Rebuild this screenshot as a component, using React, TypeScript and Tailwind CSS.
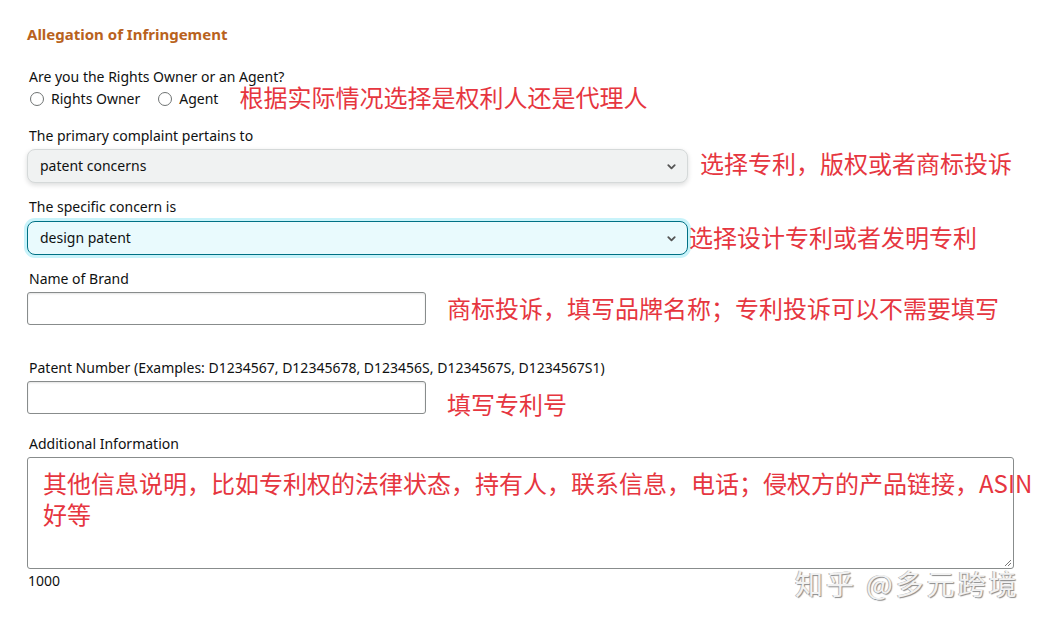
import type { ReactNode } from 'react'

const LABEL = "text-[14px] leading-[18px] text-[#0f1111] [font-family:'Noto_Sans',sans-serif]"
const NOTE = "text-[24px] leading-[30px] text-[#e6363f] whitespace-nowrap [font-family:'Noto_Sans_CJK_SC','Noto_Sans',sans-serif]"

function Chevron() {
  return (
    <svg width="11" height="11" viewBox="0 0 12 12" className="text-[#555]">
      <path d="M2.5 4.5 L6 8 L9.5 4.5" fill="none" stroke="currentColor" strokeWidth="2" strokeLinecap="round" strokeLinejoin="round" />
    </svg>
  )
}

function Radio({ label }: { label: string }) {
  return (
    <label className="flex items-center gap-[7px]">
      <span className="w-[14px] h-[14px] rounded-full border border-[#6f7373] bg-white" />
      <span className={LABEL}>{label}</span>
    </label>
  )
}

function Select({ value, focused }: { value: string; focused?: boolean }) {
  const cls = focused
    ? 'bg-[#e9fafd] border-[#007185] shadow-[0_0_0_3px_#c8f3fa]'
    : 'bg-[#f0f2f2] border-[#d5d9d9] shadow-[0_2px_5px_rgba(15,17,17,0.15)]'
  return (
    <div className={`w-[661px] h-[34px] shrink-0 rounded-[8px] border flex items-center justify-between pl-[12px] pr-[10px] ${cls}`}>
      <span className={LABEL}>{value}</span>
      <Chevron />
    </div>
  )
}

function Input() {
  return <div className="w-[399px] h-[33px] shrink-0 rounded-[3px] border border-[#888c8c] bg-white shadow-[inset_0_1px_2px_rgba(15,17,17,0.12)]" />
}

function Note({ children, className = '' }: { children: ReactNode; className?: string }) {
  return <span className={`${NOTE} ${className}`}>{children}</span>
}

export default function App() {
  return (
    <div className="relative w-[1046px] h-[628px] bg-white overflow-hidden pl-[27px] pt-[24px]">
      <h2 className="text-[15px] leading-[20px] font-bold text-[#b9621d] [font-family:'Noto_Sans',sans-serif]">
        Allegation of Infringement
      </h2>

      <div className={`${LABEL} mt-[24px] pl-[2px]`}>Are you the Rights Owner or an Agent?</div>
      <div className="flex items-center h-[22px] mt-[2px] pl-[3px]">
        <Radio label="Rights Owner" />
        <div className="ml-[18px]"><Radio label="Agent" /></div>
        <Note className="ml-[21px] -mt-[4px]">根据实际情况选择是权利人还是代理人</Note>
      </div>

      <div className={`${LABEL} mt-[17px] pl-[2px]`}>The primary complaint pertains to</div>
      <div className="flex items-center h-[34px] mt-[4px]">
        <Select value="patent concerns" />
        <Note className="ml-[12px] -mt-[6px]">选择专利，版权或者商标投诉</Note>
      </div>

      <div className={`${LABEL} mt-[15px] pl-[2px]`}>The specific concern is</div>
      <div className="flex items-center h-[34px] mt-[5px]">
        <Select value="design patent" focused />
        <Note className="ml-[1px] -mt-[2px]">选择设计专利或者发明专利</Note>
      </div>

      <div className={`${LABEL} mt-[15px] pl-[2px]`}>Name of Brand</div>
      <div className="flex items-center h-[33px] mt-[4px]">
        <Input />
        <Note className="ml-[21px] -mt-[2px]">商标投诉，填写品牌名称；专利投诉可以不需要填写</Note>
      </div>

      <div className={`${LABEL} mt-[34px] pl-[2px]`}>
        Patent Number (Examples: D1234567, D12345678, D123456S, D1234567S, D1234567S1)
      </div>
      <div className="flex items-start h-[33px] mt-[4px]">
        <Input />
        <Note className="ml-[21px] mt-[8px]">填写专利号</Note>
      </div>

      <div className={`${LABEL} mt-[21px] pl-[2px]`}>Additional Information</div>
      <div className="relative mt-[4px] w-[987px] h-[112px] rounded-[3px] border border-[#888c8c] bg-white pl-[15px] pt-[9px]">
        <div className="text-[24px] leading-[31px] text-[#e6363f] whitespace-nowrap [font-family:'Noto_Sans_CJK_SC','Noto_Sans',sans-serif]">
          <div>其他信息说明，比如专利权的法律状态，持有人，联系信息，电话；侵权方的产品链接，ASIN</div>
          <div>好等</div>
        </div>
        <svg width="9" height="9" viewBox="0 0 9 9" className="absolute right-[1px] bottom-[1px]">
          <path d="M8 2 L2 8 M8 5 L5 8" stroke="#777" strokeWidth="1" />
        </svg>
      </div>
      <div className={`${LABEL} mt-[3px] pl-[1px]`}>1000</div>

      <div className="absolute left-[795px] top-[564px] text-[28px] leading-[38px] tracking-[3px] text-[#f2f2f2] whitespace-nowrap [text-shadow:1px_1px_1px_#8a8a8a,-1px_0_0_#b8b8b8] [font-family:'Noto_Sans_CJK_SC','Noto_Sans',sans-serif]">
        知乎 @多元跨境
      </div>
    </div>
  )
}
